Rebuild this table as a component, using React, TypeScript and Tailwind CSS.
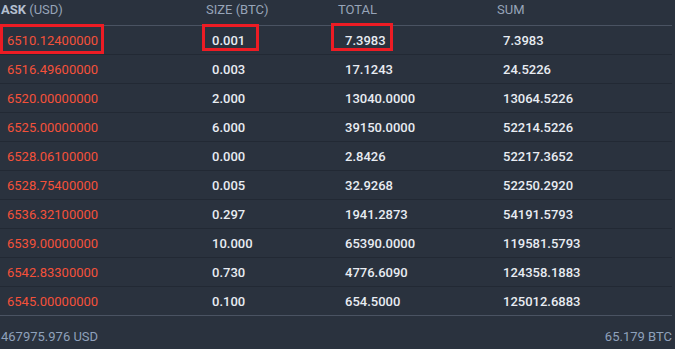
import React from 'react';

const asks = [
  { price: '6510.12400000', size: '0.001', total: '7.3983', sum: '7.3983' },
  { price: '6516.49600000', size: '0.003', total: '17.1243', sum: '24.5226' },
  { price: '6520.00000000', size: '2.000', total: '13040.0000', sum: '13064.5226' },
  { price: '6525.00000000', size: '6.000', total: '39150.0000', sum: '52214.5226' },
  { price: '6528.06100000', size: '0.000', total: '2.8426', sum: '52217.3652' },
  { price: '6528.75400000', size: '0.005', total: '32.9268', sum: '52250.2920' },
  { price: '6536.32100000', size: '0.297', total: '1941.2873', sum: '54191.5793' },
  { price: '6539.00000000', size: '10.000', total: '65390.0000', sum: '119581.5793' },
  { price: '6542.83300000', size: '0.730', total: '4776.6090', sum: '124358.1883' },
  { price: '6545.00000000', size: '0.100', total: '654.5000', sum: '125012.6883' },
];

const cols = 'grid grid-cols-[205px_132px_159px_1fr]';

export default function App() {
  return (
    <div
      className="relative w-[675px] h-[349px] bg-[#2a323e] text-[13px] leading-[15px] overflow-hidden"
      style={{ fontFamily: 'Roboto, "Liberation Sans", sans-serif' }}
    >
      <div className="w-[672px]">
        {/* Header */}
        <div className={`${cols} h-[26px] pt-[2px] border-b border-[#4a5362] text-[#97a4b8]`}>
          <div className="pl-[1px]">
            <span className="font-bold text-[#b3bfcf]">ASK</span> (USD)
          </div>
          <div className="pl-[1px]">SIZE (BTC)</div>
          <div className="pl-[1px]">TOTAL</div>
          <div className="pl-[1px]">SUM</div>
        </div>

        {/* Rows */}
        {asks.map((row, i) => (
          <div
            key={row.price}
            className={`${cols} h-[29px] items-center border-b ${
              i === asks.length - 1 ? 'border-[#4a5362]' : 'border-[#222934]'
            }`}
          >
            <div className="pl-[7px] text-[#f4513a]">{row.price}</div>
            <div className="pl-[7px] font-medium text-[#e8ecf2]">{row.size}</div>
            <div className="pl-[8px] font-medium text-[#e8ecf2]">{row.total}</div>
            <div className="pl-[7px] font-medium text-[#e8ecf2]">{row.sum}</div>
          </div>
        ))}

        {/* Footer */}
        <div className="flex justify-between pt-[13px] pl-[1px] text-[#8fa1bb]">
          <span>467975.976 USD</span>
          <span>65.179 BTC</span>
        </div>
      </div>

      {/* Highlight boxes */}
      <div className="absolute left-0 top-[24px] w-[104px] h-[30px] border-[3px] border-[#ed1c24]" />
      <div className="absolute left-[202px] top-[24px] w-[57px] h-[27px] border-[3px] border-[#ed1c24]" />
      <div className="absolute left-[331px] top-[23px] w-[62px] h-[28px] border-[3px] border-[#ed1c24]" />
    </div>
  );
}
